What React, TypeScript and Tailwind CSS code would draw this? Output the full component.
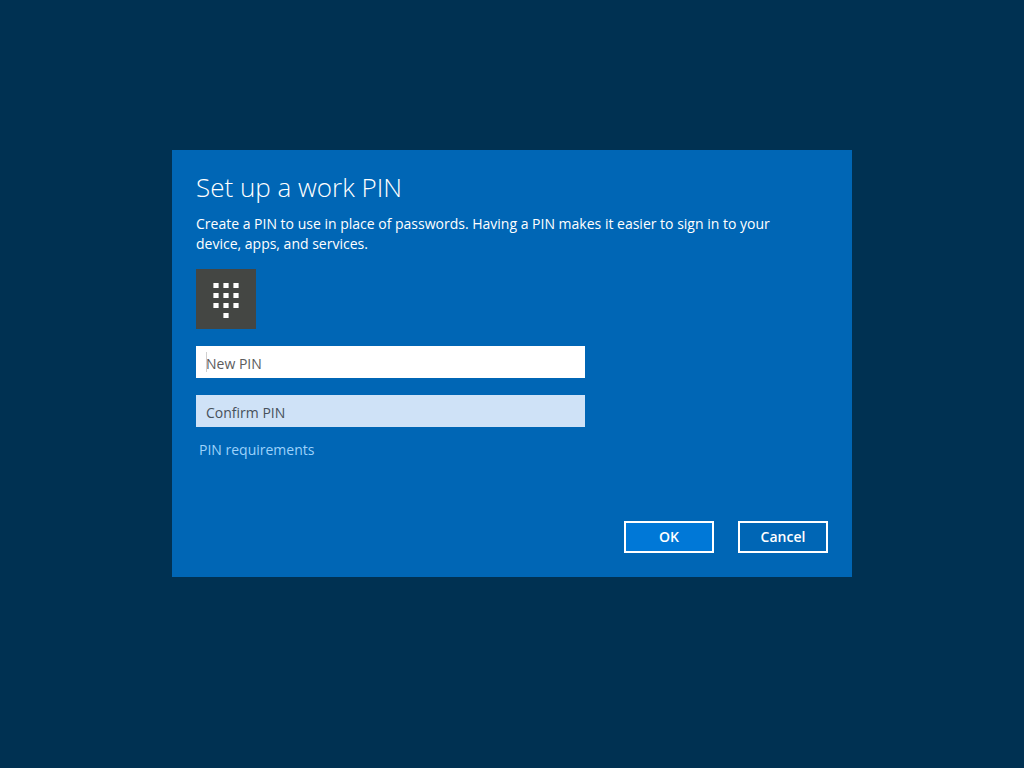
import * as React from "react";

/**
 * Keypad tile shown above the PIN fields
 */
function KeypadIcon() {
    const keys = [
        [0, 0], [1, 0], [2, 0],
        [0, 1], [1, 1], [2, 1],
        [0, 2], [1, 2], [2, 2],
        [1, 3],
    ];

    return (
        <svg className="block size-[60px] bg-[#444643]" viewBox="0 0 60 60" aria-hidden="true">
            {keys.map(([col, row]) => (
                <rect key={`${col}-${row}`} x={17.4 + col * 10} y={14 + row * 10} width="5.2" height="5" fill="#fff"/>
            ))}
        </svg>
    );
}

interface PinFieldProps {
    label: string;
    className: string;
    value: string;
    onChange: (value: string) => void;
    showCaret?: boolean;
}

function PinField({label, className, value, onChange, showCaret}: PinFieldProps) {
    return (
        <div className="relative w-full max-w-[389px]">
            <input
                type="password"
                aria-label={label}
                placeholder={label}
                value={value}
                onChange={(e) => onChange(e.target.value)}
                className={`block h-8 w-full px-[10px] pt-[3px] text-sm text-[#333] outline-none ${className}`}
            />
            {showCaret && !value && (
                <span className="pointer-events-none absolute left-[10px] top-[6px] h-5 w-px bg-[#d0d0d0]"/>
            )}
        </div>
    );
}

/**
 * Dialog asking the user to choose a work PIN
 */
export default function App() {
    const [pin, setPin] = React.useState("");
    const [confirmPin, setConfirmPin] = React.useState("");

    return (
        <main className="flex min-h-screen items-center justify-center bg-[#003152] px-4 pb-[41px] font-['Open_Sans',sans-serif] text-white">
            <form
                className="w-full max-w-[680px] bg-[#0066b5] p-6"
                onSubmit={(e) => e.preventDefault()}
            >
                <h1 className="text-[26px] leading-[26px] font-light">Set up a work PIN</h1>
                <p className="mt-[14px] max-w-[600px] text-sm leading-5">
                    Create a PIN to use in place of passwords. Having a PIN makes it easier to sign in to your
                    device, apps, and services.
                </p>

                <div className="mt-[15px] flex flex-col gap-[17px]">
                    <KeypadIcon/>
                    <PinField
                        label="New PIN"
                        className="bg-white placeholder:text-[#5c5c5c]"
                        value={pin}
                        onChange={setPin}
                        showCaret
                    />
                    <PinField
                        label="Confirm PIN"
                        className="bg-[#cfe2f7] placeholder:text-[#47515b]"
                        value={confirmPin}
                        onChange={setConfirmPin}
                    />
                </div>

                <a href="#requirements" className="mt-[13px] ml-[3px] inline-block text-sm leading-5 text-[#9dd2fb]">
                    PIN requirements
                </a>

                <div className="mt-[60px] flex justify-end gap-6">
                    <button type="submit" className="h-8 w-[90px] border-2 border-white bg-[#0078d7] text-sm font-semibold">
                        OK
                    </button>
                    <button type="button" className="h-8 w-[90px] border-2 border-white text-sm font-semibold">
                        Cancel
                    </button>
                </div>
            </form>
        </main>
    );
}
